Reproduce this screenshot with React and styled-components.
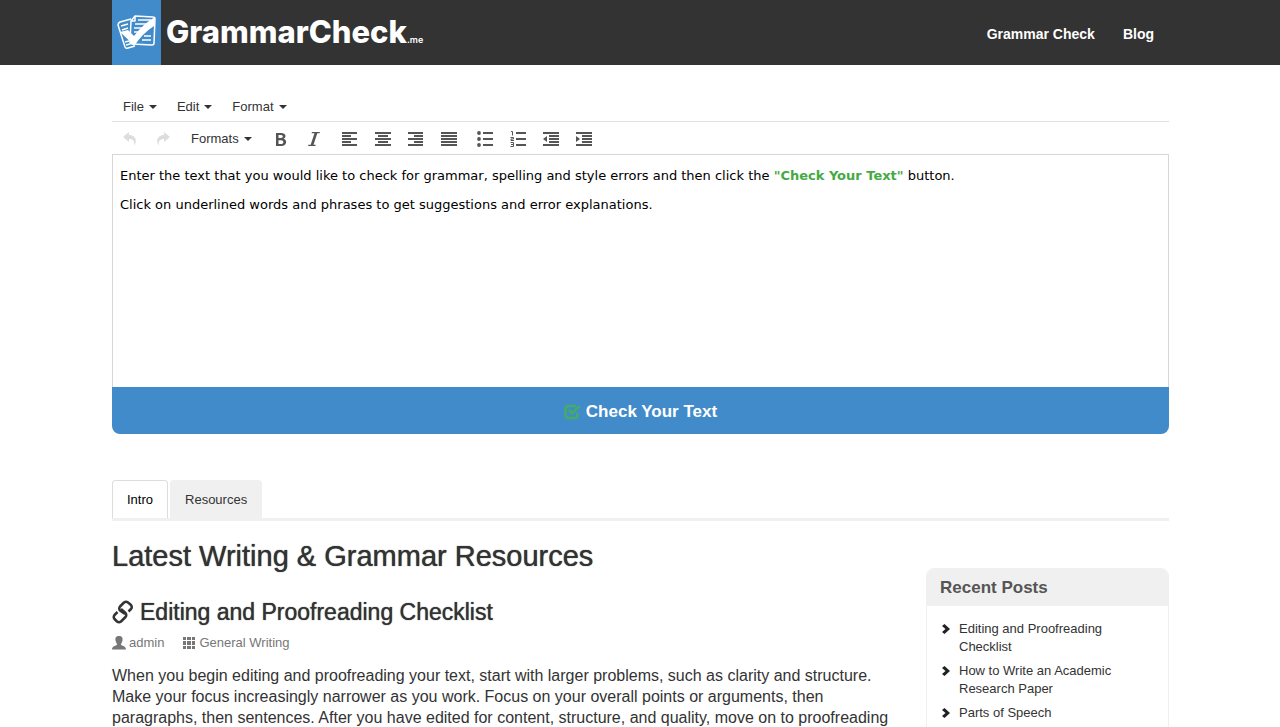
import React from "react";
import styled, { createGlobalStyle } from "styled-components";

const sans = '"Liberation Sans", Arial, sans-serif';

const GlobalStyle = createGlobalStyle`
  *, *::before, *::after { box-sizing: border-box; }
  body { margin: 0; background: #fff; color: #333; font-family: ${sans}; }
  h1, h2, h3, p, ul { margin: 0; padding: 0; }
  button { font-family: inherit; }
`;

const Container = styled.div`
  width: 100%;
  max-width: 1280px;
  margin: 0 auto;
  padding: 0 111px 0 112px;

  @media (max-width: 900px) {
    padding: 0 16px;
  }
`;

const Header = styled.header`
  background: #333;
`;

const HeaderInner = styled(Container)`
  display: flex;
  justify-content: space-between;
  align-items: center;
`;

const Brand = styled.a`
  display: flex;
  align-items: center;
  gap: 5px;
  height: 65px;
  color: #fff;
  text-decoration: none;
`;

const BrandMark = styled.span`
  display: flex;
  align-items: center;
  justify-content: center;
  width: 49px;
  height: 65px;
  background: #428bca;
`;

const BrandName = styled.span`
  display: flex;
  align-items: baseline;
  padding-top: 7px;
  font-family: Inter, sans-serif;
  font-size: 31px;
  font-weight: 800;
  line-height: 40px;
`;

const BrandSuffix = styled.small`
  font-size: 9px;
  font-weight: 600;
`;

const Nav = styled.nav`
  display: flex;
  gap: 28px;
  padding: 3px 15px 0 0;
`;

const NavLink = styled.a`
  color: #fff;
  font-size: 14px;
  font-weight: 700;
  line-height: 20px;
  text-decoration: none;
`;

const Editor = styled.section`
  margin-top: 27px;
`;

const MenuBar = styled.div`
  display: flex;
  align-items: center;
  height: 30px;
  padding-left: 1px;
  border-bottom: 1px solid #e0e0e0;
`;

const ToolBar = styled.div`
  display: flex;
  align-items: center;
  gap: 3px;
  height: 32px;
  padding-top: 2px;
`;

const ToolGroup = styled.div`
  display: flex;
`;

const MenuButton = styled.button`
  display: flex;
  align-items: center;
  gap: 5px;
  padding: 0 10px;
  border: 0;
  background: none;
  color: #333;
  font-size: 13px;
  line-height: 20px;

  &::after {
    content: "";
    border: 4px solid transparent;
    border-top-color: #333;
    border-bottom: 0;
  }
`;

const ToolButton = styled.button`
  display: flex;
  align-items: center;
  justify-content: center;
  width: 33px;
  height: 28px;
  padding: 0;
  border: 0;
  background: none;
  color: ${(p) => (p.disabled ? "#ddd" : "#555")};
`;

const TextArea = styled.div`
  min-height: 233px;
  padding: 12px 7px;
  border: 1px solid #d6d6d6;
  border-bottom: 0;
  outline: 0;
  color: #000;
  font-family: "DejaVu Sans", Verdana, sans-serif;
  font-size: 13px;
  line-height: 18px;

  p + p { margin-top: 11px; }
  strong { color: #4a4; }
`;

const CheckButton = styled.button`
  display: flex;
  align-items: center;
  justify-content: center;
  gap: 5px;
  width: 100%;
  height: 47px;
  padding: 2px 0 0;
  border: 0;
  border-radius: 0 0 8px 8px;
  background: #428bca;
  color: #fff;
  font-size: 17px;
  font-weight: 700;
`;

const Tabs = styled.div`
  display: flex;
  gap: 2px;
  margin-top: 46px;
  border-bottom: 3px solid #f0f0f0;
`;

const Tab = styled.button`
  height: 38px;
  padding: 0 14px;
  border: 1px solid ${(p) => (p["aria-selected"] ? "#ddd" : "#f0f0f0")};
  border-bottom: 0;
  border-radius: 4px 4px 0 0;
  background: ${(p) => (p["aria-selected"] ? "#fff" : "#f0f0f0")};
  color: ${(p) => (p["aria-selected"] ? "#000" : "#333")};
  font-size: 13px;
`;

const Columns = styled.div`
  display: flex;
  align-items: flex-start;
  gap: 32px;
`;

const Main = styled.main`
  flex: 1;
  min-width: 0;
`;

const Title = styled.h1`
  margin-top: 19px;
  font-size: 29px;
  font-weight: 400;
  line-height: 32px;
  text-shadow: 0 0 1px #333;
`;

const ArticleTitle = styled.h2`
  display: flex;
  align-items: center;
  gap: 6px;
  margin-top: 27px;
  font-size: 23px;
  font-weight: 400;
  line-height: 26px;
  text-shadow: 0 0 1px #333;
`;

const Meta = styled.div`
  display: flex;
  gap: 18px;
  margin-top: 8px;
  color: #777;
  font-size: 13px;
  line-height: 20px;
`;

const MetaItem = styled.a`
  display: flex;
  align-items: center;
  gap: 3px;
  color: inherit;
  text-decoration: none;
`;

const Paragraph = styled.p`
  margin-top: 12px;
  font-size: 16px;
  line-height: 21px;
`;

const Sidebar = styled.aside`
  flex: none;
  width: 243px;
  margin-top: 47px;
  border: 1px solid #f0f0f0;
  border-radius: 8px;
`;

const SidebarTitle = styled.h3`
  padding: 8px 13px;
  border-radius: 7px 7px 0 0;
  background: #f0f0f0;
  color: #555;
  font-size: 17px;
  line-height: 21px;
`;

const PostList = styled.ul`
  display: grid;
  gap: 6px;
  padding: 14px 32px 14px 15px;
  list-style: none;
`;

const Post = styled.li`
  display: flex;
  gap: 8px;
  font-size: 13px;
  line-height: 18px;

  svg { flex: none; margin-top: 4px; }
  a { color: #333; text-decoration: none; }
`;

const LogoIcon = () => (
  <svg width="40" height="38" viewBox="0 0 40 38" fill="none" stroke="#fff" aria-hidden="true">
    <g strokeWidth="1.5" strokeLinejoin="round">
      <path d="M14 5 L3 8 Q1 9 1 11 L8 33 Q9 35 11 34 L18 32" />
      <path d="M18 2 L36 3 Q38 3 38 5 L37 29 Q37 31 35 31 L15 30 Q13 30 13 28 L14 7 Z" />
      <path d="M18 2 V7 H14" />
    </g>
    <path
      d="M21 6 H34 M18 10 H32 M17 14 H28 M17 18 H24 M27 22 H34 M25 26 H34 M4 12 L11 10 M5 16 L11 14 M8 28 L12 27 M9 31 L13 30"
      strokeWidth="1.500"
    />
    <path d="M3 18 L11 16 L17 22 Q26 10 38 3 L37 12 Q26 19 17 32 Q11 25 3 18 Z" fill="#fff" stroke="none" />
  </svg>
);

const UndoIcon = ({ flip }) => (
  <svg width="16" height="16" viewBox="0 0 16 16" fill="currentColor" aria-hidden="true">
    <path
      transform={flip ? "matrix(-1 0 0 1 17 0)" : "translate(1 0)"}
      d="M7 1 L1 6 L7 11 V8 C11 8 13 10 12 15 C16 9 13 4 7 4 Z"
    />
  </svg>
);

const toolShapes = {
  bold: (
    <path
      fillRule="evenodd"
      d="M3 2 H8 C13.500 2 13.500 6.700 10.500 7.700 C14.500 8.700 14 15 8.500 15 H3 Z M5.500 4 V7 H8 C10.500 7 10.500 4 8 4 Z M5.500 9.200 V13 H8 C11.200 13 11.200 9.200 8 9.200 Z"
    />
  ),
  italic: <path d="M6 1 H14 L13.500 2.300 H11.300 L7.500 13.700 H9.800 L9.300 15 H2 L2.500 13.700 H4.700 L8.500 2.300 H5.500 Z" />,
  left: <path d="M0 1h15v2H0z M0 4h9v2H0z M0 7h15v2H0z M0 10h9v2H0z M0 13h15v2H0z" />,
  center: <path d="M0 1h16v2H0z M3 4h10v2H3z M0 7h16v2H0z M3 10h10v2H3z M0 13h16v2H0z" />,
  right: <path d="M0 1h15v2H0z M6 4h9v2H6z M0 7h15v2H0z M6 10h9v2H6z M0 13h15v2H0z" />,
  justify: <path d="M0 1h16v2H0z M0 4h16v2H0z M0 7h16v2H0z M0 10h16v2H0z M0 13h16v2H0z" />,
  bullets: (
    <>
      <circle cx="2" cy="2" r="1.900" />
      <circle cx="2" cy="8" r="1.900" />
      <circle cx="2" cy="14" r="1.900" />
      <path d="M6 1h10v2H6z M6 7h10v2H6z M6 13h10v2H6z" />
    </>
  ),
  numbers: (
    <>
      <path d="M6 1h10v2H6z M6 7h10v2H6z M6 13h10v2H6z" />
      <path
        fill="none"
        stroke="currentColor"
        d="M1 .5H2.500V4.500 M.5 6.500H3.500V8H1V9.500H4 M.5 11.500H3.500V15.500H.5 M1 13.500H3.500"
      />
    </>
  ),
  outdent: <path d="M0 1h16v2H0z M6 4h10v2H6z M6 7h10v2H6z M6 10h10v2H6z M0 13h16v2H0z M4 5v6L0 8z" />,
  indent: <path d="M0 1h16v2H0z M6 4h10v2H6z M6 7h10v2H6z M6 10h10v2H6z M0 13h16v2H0z M0 5v6L4 8z" />,
};

const Tool = ({ label, shape }) => (
  <ToolButton type="button" aria-label={label}>
    <svg width="16" height="16" viewBox="0 0 16 16" fill="currentColor" aria-hidden="true">
      {toolShapes[shape]}
    </svg>
  </ToolButton>
);

const CheckIcon = () => (
  <svg width="17" height="16" viewBox="0 0 17 16" fill="none" stroke="#45ad62" strokeWidth="2.500" aria-hidden="true">
    <path d="M12 2 H4.500 Q1.500 2 1.500 5 V11 Q1.500 14 4.500 14 H10.500 Q13.500 14 13.500 11 V9" />
    <path d="M5 6 L8 9.500 L15.500 2" />
  </svg>
);

const LinkIcon = () => (
  <svg width="22" height="24" viewBox="0 0 22 24" fill="none" stroke="#333" strokeWidth="2.500" strokeLinejoin="round" aria-hidden="true">
    <path d="M13 14 L8 10.500 Q6.500 8.500 8 6.500 L12 2.500 Q14 1 16 2.500 L19 5 Q20.500 7 19 9 L16.500 11.500" />
    <path d="M9 9 L13.500 13 Q15 15 13.500 17 L9 21.500 Q7 23 5 21.500 L2.500 19 Q1 17 2.500 15 L5.500 12" />
  </svg>
);

const UserIcon = () => (
  <svg width="14" height="14" viewBox="0 0 14 14" fill="currentColor" aria-hidden="true">
    <path d="M7 0 C10 0 11 2 10.500 4.500 C10 7 9 7.500 9 8.500 C9 10 14 9.500 14 13.500 H0 C0 9.500 5 10 5 8.500 C5 7.500 4 7 3.500 4.500 C3 2 4 0 7 0 Z" />
  </svg>
);

const GridIcon = () => (
  <svg width="14" height="14" viewBox="0 0 14 14" fill="currentColor" aria-hidden="true">
    <path d="M1 1h3v3H1z M5 1h4v3H5z M10 1h3v3h-3z M1 5h3v4H1z M5 5h4v4H5z M10 5h3v4h-3z M1 10h3v3H1z M5 10h4v3H5z M10 10h3v3h-3z" />
  </svg>
);

const ChevronIcon = () => (
  <svg width="9" height="10" viewBox="0 0 9 10" fill="#222" aria-hidden="true">
    <path d="M0 2 L2.500 0 L8 5 L2.500 10 L0 8 L3.500 5 Z" />
  </svg>
);

const posts = [
  "Editing and Proofreading Checklist",
  "How to Write an Academic Research Paper",
  "Parts of Speech",
];

export default function App() {
  return (
    <>
      <GlobalStyle />
      <Header>
        <HeaderInner>
          <Brand href="#">
            <BrandMark>
              <LogoIcon />
            </BrandMark>
            <BrandName>
              GrammarCheck<BrandSuffix>.me</BrandSuffix>
            </BrandName>
          </Brand>
          <Nav>
            <NavLink href="#check">Grammar Check</NavLink>
            <NavLink href="#blog">Blog</NavLink>
          </Nav>
        </HeaderInner>
      </Header>

      <Container>
        <Editor id="check">
          <MenuBar>
            <MenuButton type="button">File</MenuButton>
            <MenuButton type="button">Edit</MenuButton>
            <MenuButton type="button">Format</MenuButton>
          </MenuBar>
          <ToolBar>
            <ToolGroup>
              <ToolButton type="button" aria-label="Undo" disabled>
                <UndoIcon />
              </ToolButton>
              <ToolButton type="button" aria-label="Redo" disabled>
                <UndoIcon flip />
              </ToolButton>
            </ToolGroup>
            <MenuButton type="button">Formats</MenuButton>
            <ToolGroup>
              <Tool label="Bold" shape="bold" />
              <Tool label="Italic" shape="italic" />
            </ToolGroup>
            <ToolGroup>
              <Tool label="Align left" shape="left" />
              <Tool label="Align center" shape="center" />
              <Tool label="Align right" shape="right" />
              <Tool label="Justify" shape="justify" />
            </ToolGroup>
            <ToolGroup>
              <Tool label="Bullet list" shape="bullets" />
              <Tool label="Numbered list" shape="numbers" />
              <Tool label="Decrease indent" shape="outdent" />
              <Tool label="Increase indent" shape="indent" />
            </ToolGroup>
          </ToolBar>
          <TextArea role="textbox" aria-label="Text to check" aria-multiline="true" contentEditable suppressContentEditableWarning spellCheck={false}>
            <p>
              Enter the text that you would like to check for grammar, spelling and style errors and then click the{" "}
              <strong>"Check Your Text"</strong> button.
            </p>
            <p>Click on underlined words and phrases to get suggestions and error explanations.</p>
          </TextArea>
          <CheckButton type="button">
            <CheckIcon />
            Check Your Text
          </CheckButton>
        </Editor>

        <Tabs role="tablist">
          <Tab type="button" role="tab" aria-selected={true}>Intro</Tab>
          <Tab type="button" role="tab" aria-selected={false}>Resources</Tab>
        </Tabs>

        <Columns>
          <Main>
            <Title>Latest Writing &amp; Grammar Resources</Title>
            <article>
              <ArticleTitle>
                <LinkIcon />
                Editing and Proofreading Checklist
              </ArticleTitle>
              <Meta>
                <MetaItem href="#admin">
                  <UserIcon />
                  admin
                </MetaItem>
                <MetaItem href="#general">
                  <GridIcon />
                  General Writing
                </MetaItem>
              </Meta>
              <Paragraph>
                When you begin editing and proofreading your text, start with larger problems, such as clarity and
                structure. Make your focus increasingly narrower as you work. Focus on your overall points or arguments,
                then paragraphs, then sentences. After you have edited for content, structure, and quality, move on to
                proofreading
              </Paragraph>
            </article>
          </Main>
          <Sidebar>
            <SidebarTitle>Recent Posts</SidebarTitle>
            <PostList>
              {posts.map((post) => (
                <Post key={post}>
                  <ChevronIcon />
                  <a href="#post">{post}</a>
                </Post>
              ))}
            </PostList>
          </Sidebar>
        </Columns>
      </Container>
    </>
  );
}
